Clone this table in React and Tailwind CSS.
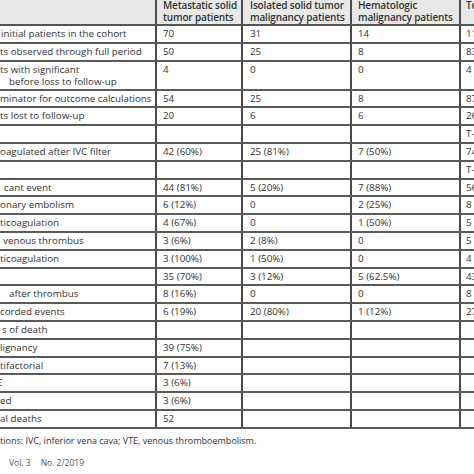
import React from "react";

const rows = [
  { h: "h-[17.8px]", label: "initial patients in the cohort", pl: "pl-[1px]", c: ["70", "31", "14", "115"] },
  { h: "h-[17.8px]", label: "ts observed through full period", pl: "pl-0", c: ["50", "25", "8", "83"] },
  { h: "h-[29px]", label: (<>ts with significant<br /><span className="pl-[9px]">before loss to follow-up</span></>), pl: "pl-0", c: ["4", "0", "0", "4"] },
  { h: "h-[17.8px]", label: "minator for outcome calculations", pl: "pl-0", c: ["54", "25", "8", "87"] },
  { h: "h-[17.8px]", label: "ts lost to follow-up", pl: "pl-0", c: ["20", "6", "6", "26"] },
  { h: "h-[17.8px]", label: "", pl: "pl-0", c: ["", "", "", "T-test"] },
  { h: "h-[17.8px]", label: "oagulated after IVC filter", pl: "pl-0", c: ["42 (60%)", "25 (81%)", "7 (50%)", "74 (64%)"] },
  { h: "h-[17.8px]", label: "", pl: "pl-0", c: ["", "", "", "T-test"] },
  { h: "h-[17.8px]", label: "cant event", pl: "pl-[4px]", c: ["44 (81%)", "5 (20%)", "7 (88%)", "56 (64%)"] },
  { h: "h-[17.8px]", label: "onary embolism", pl: "pl-0", c: ["6 (12%)", "0", "2 (25%)", "8 (9%)"] },
  { h: "h-[17.8px]", label: "ticoagulation", pl: "pl-0", c: ["4 (67%)", "0", "1 (50%)", "5 (63%)"] },
  { h: "h-[17.8px]", label: "venous thrombus", pl: "pl-[3px]", c: ["3 (6%)", "2 (8%)", "0", "5 (6%)"] },
  { h: "h-[17.8px]", label: "ticoagulation", pl: "pl-0", c: ["3 (100%)", "1 (50%)", "0", "4 (80%)"] },
  { h: "h-[17.8px]", label: "", pl: "pl-0", c: ["35 (70%)", "3 (12%)", "5 (62.5%)", "43 (52%)"] },
  { h: "h-[17.8px]", label: "after thrombus", pl: "pl-[9px]", c: ["8 (16%)", "0", "0", "8 (9%)"] },
  { h: "h-[17.8px]", label: "corded events", pl: "pl-0", c: ["6 (19%)", "20 (80%)", "1 (12%)", "27 (31%)"] },
  { h: "h-[17.8px]", label: "s of death", pl: "pl-[2px]", c: ["", "", "", ""] },
  { h: "h-[17.8px]", label: "lignancy", pl: "pl-0", c: ["39 (75%)", "", "", ""] },
  { h: "h-[17.8px]", label: "tifactorial", pl: "pl-0", c: ["7 (13%)", "", "", ""] },
  { h: "h-[17.8px]", label: "E", pl: "-ml-[3px]", c: ["3 (6%)", "", "", ""] },
  { h: "h-[17.8px]", label: "ed", pl: "pl-0", c: ["3 (6%)", "", "", ""] },
  { h: "h-[17.8px]", label: "al deaths", pl: "pl-0", c: ["52", "", "", ""] },
];

const grid = "grid grid-cols-[157px_86px_109px_109px_200px]";
const vr = "border-r-2 border-[#4a4a4a]";

export default function App() {
  return (
    <div
      className="w-[474px] h-[474px] overflow-hidden bg-white text-[#333] text-[9.8px]"
      style={{ fontFamily: '"Open Sans", "Noto Sans", sans-serif' }}
    >
      <div className="w-[700px]">
        <div className={`${grid} h-[26px] bg-[#e8e8e8] border-b-2 border-[#555] font-semibold text-[10px] tracking-[-0.15px] leading-[11.5px]`}>
          <div className={vr} />
          <div className={`${vr} pl-[6px] whitespace-nowrap`}>Metastatic solid<br />tumor patients</div>
          <div className={`${vr} pl-[7px] whitespace-nowrap`}>Isolated solid tumor<br />malignancy patients</div>
          <div className={`${vr} pl-[6px] whitespace-nowrap`}>Hematologic<br />malignancy patients</div>
          <div className="pl-[5px]">Total</div>
        </div>
        {rows.map((r, i) => (
          <div key={i} className={`${grid} ${r.h} border-b-2 border-[#5a5a5a] leading-[12px]`}>
            <div className={`${vr} overflow-hidden whitespace-nowrap pt-[2px]`}>
              <div className={r.pl}>{r.label}</div>
            </div>
            <div className={`${vr} pl-[6px] pt-[2px] whitespace-nowrap`}>{r.c[0]}</div>
            <div className={`${vr} pl-[7px] pt-[2px] whitespace-nowrap`}>{r.c[1]}</div>
            <div className={`${vr} pl-[6px] pt-[2px] whitespace-nowrap`}>{r.c[2]}</div>
            <div className="pl-[5px] pt-[2px] whitespace-nowrap">{r.c[3]}</div>
          </div>
        ))}
        <div className="pt-[6px] text-[9px] leading-[11px]">tions: IVC, inferior vena cava; VTE, venous thromboembolism.</div>
        <div className="pt-[12px] pl-[9px] text-[8.5px] text-[#555] leading-[10px]">
          Vol. 3<span className="pl-[10px]">No. 2/2019</span>
        </div>
      </div>
    </div>
  );
}
